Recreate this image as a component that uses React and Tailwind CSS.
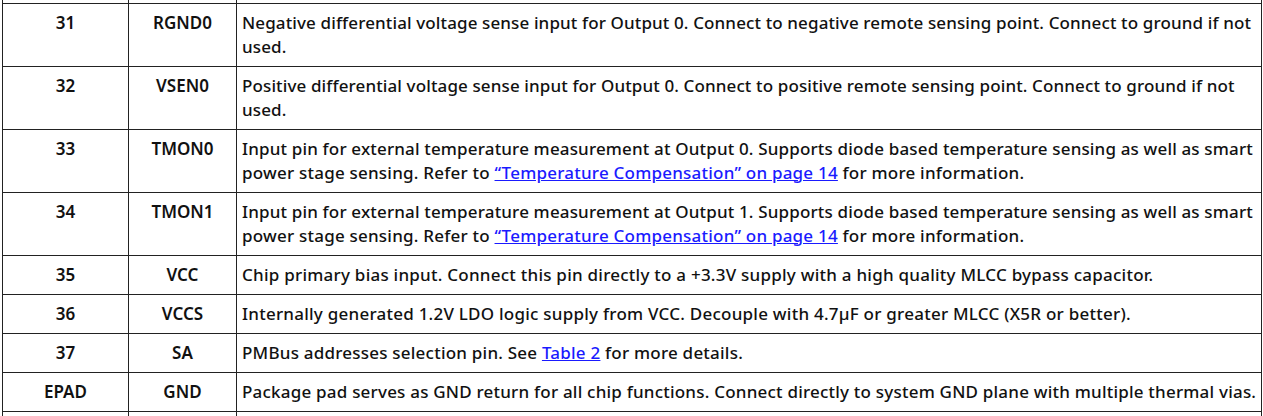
import React from 'react';

const link = (text) => ({ link: text });

// each line is laid out as in the datasheet; `t` is the letter-spacing class for that line
const rows = [
  {
    pin: '31',
    name: 'RGND0',
    lines: [
      { t: 'tracking-[0.12px]', parts: ['Negative differential voltage sense input for Output 0. Connect to negative remote sensing point. Connect to ground if not'] },
      { t: 'tracking-[0.12px]', parts: ['used.'] },
    ],
  },
  {
    pin: '32',
    name: 'VSEN0',
    lines: [
      { t: 'tracking-[0.12px]', parts: ['Positive differential voltage sense input for Output 0. Connect to positive remote sensing point. Connect to ground if not'] },
      { t: 'tracking-[0.12px]', parts: ['used.'] },
    ],
  },
  {
    pin: '33',
    name: 'TMON0',
    lines: [
      { t: 'tracking-[0.16px]', parts: ['Input pin for external temperature measurement at Output 0. Supports diode based temperature sensing as well as smart'] },
      { t: 'tracking-[0.22px]', parts: ['power stage sensing. Refer to ', link('“Temperature Compensation” on page 14'), ' for more information.'] },
    ],
  },
  {
    pin: '34',
    name: 'TMON1',
    lines: [
      { t: 'tracking-[0.16px]', parts: ['Input pin for external temperature measurement at Output 1. Supports diode based temperature sensing as well as smart'] },
      { t: 'tracking-[0.22px]', parts: ['power stage sensing. Refer to ', link('“Temperature Compensation” on page 14'), ' for more information.'] },
    ],
  },
  {
    pin: '35',
    name: 'VCC',
    lines: [{ t: 'tracking-[0.24px]', parts: ['Chip primary bias input. Connect this pin directly to a +3.3V supply with a high quality MLCC bypass capacitor.'] }],
  },
  {
    pin: '36',
    name: 'VCCS',
    lines: [{ t: 'tracking-[0.24px]', parts: ['Internally generated 1.2V LDO logic supply from VCC. Decouple with 4.7µF or greater MLCC (X5R or better).'] }],
  },
  {
    pin: '37',
    name: 'SA',
    lines: [{ t: 'tracking-[0.22px]', parts: ['PMBus addresses selection pin. See ', link('Table 2'), ' for more details.'] }],
  },
  {
    pin: 'EPAD',
    name: 'GND',
    lines: [{ t: 'tracking-[0.21px]', parts: ['Package pad serves as GND return for all chip functions. Connect directly to system GND plane with multiple thermal vias.'] }],
  },
];

const cell = 'border-x-[1.5px] border-[#222]';

function Line({ line }) {
  return (
    <span className={`block whitespace-nowrap ${line.t}`}>
      {line.parts.map((p, i) =>
        typeof p === 'string' ? (
          <span key={i}>{p}</span>
        ) : (
          <a key={i} href="#" className="text-[#1a1aff] underline">
            {p.link}
          </a>
        )
      )}
    </span>
  );
}

export default function App() {
  return (
    <div className="h-[416px] w-[1263px] overflow-hidden bg-white pl-[2px] font-['Noto_Sans',sans-serif] text-[17px] text-[#111]">
      <table className="w-[1260px] table-fixed border-collapse">
        <colgroup>
          <col className="w-[126px]" />
          <col className="w-[108px]" />
          <col />
        </colgroup>
        <tbody>
          <tr className="h-[3px]">
            <td className={cell} />
            <td className={cell} />
            <td className={cell} />
          </tr>
          {rows.map((r) => (
            <tr key={r.pin} className="border-y-[1.5px] border-[#222]">
              <td className={`${cell} px-1 py-[7px] text-center align-top font-semibold leading-6`}>{r.pin}</td>
              <td className={`${cell} px-1 py-[7px] text-center align-top font-semibold leading-6`}>{r.name}</td>
              <td className={`${cell} overflow-hidden pl-[5px] pr-1 py-[7px] align-top font-medium leading-6`}>
                {r.lines.map((line, i) => (
                  <Line key={i} line={line} />
                ))}
              </td>
            </tr>
          ))}
          <tr className="h-[6px]">
            <td className={cell} />
            <td className={cell} />
            <td className={cell} />
          </tr>
        </tbody>
      </table>
    </div>
  );
}
